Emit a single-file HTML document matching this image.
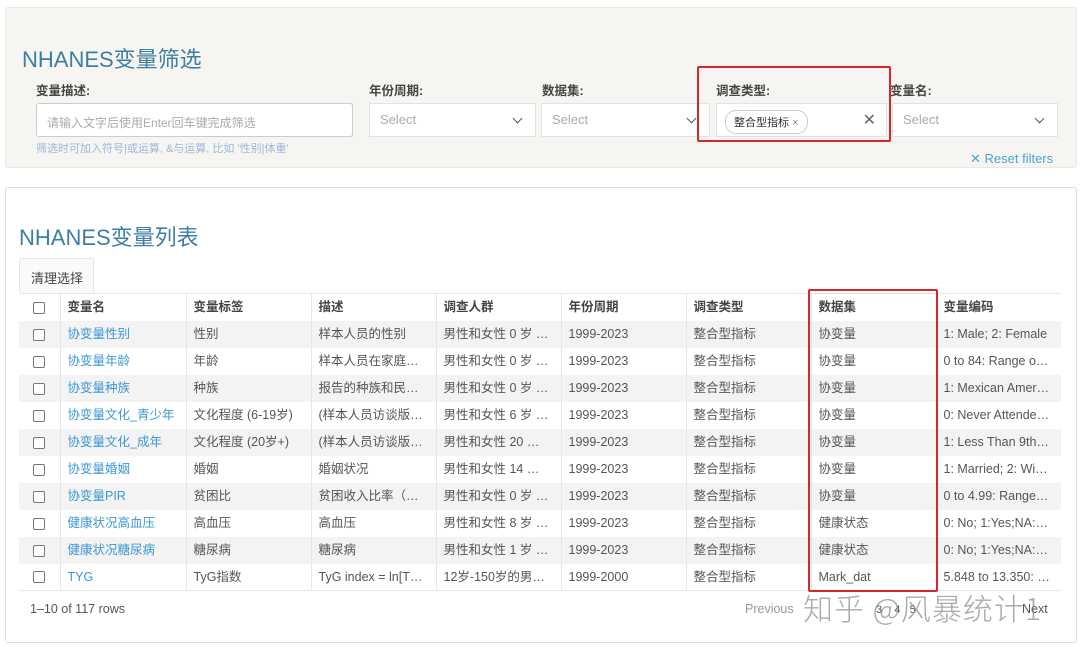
<!DOCTYPE html>
<html><head><meta charset="utf-8"><style>
*{box-sizing:border-box;margin:0;padding:0}
body{width:1080px;height:647px;background:#fff;font-family:"Liberation Sans","Noto Sans CJK SC",sans-serif;position:relative;overflow:hidden;color:#333}
.abs{position:absolute}
.p1{left:5px;top:7px;width:1072px;height:161px;background:#f7f5f1;border:1px solid #ebe8e2;border-radius:3px}
.p2{left:5px;top:187px;width:1072px;height:456px;background:#fff;border:1px solid #ddd;border-radius:3px}
h1{position:absolute;font-weight:normal;font-size:22px;color:#3d7fa3}
.lbl{position:absolute;top:80px;font-size:12.5px;font-weight:bold;color:#444}
.inp{position:absolute;top:103px;height:34px;background:#fff;border:1px solid #e2e2e2;font-size:13px;color:#aaa;padding:8px 10px}
.chev{position:absolute;right:14px;top:11px;width:7px;height:7px;border-right:1.5px solid #555;border-bottom:1.5px solid #555;transform:rotate(45deg)}
table{position:absolute;left:19px;top:293px;border-collapse:collapse;table-layout:fixed;width:1042px;font-size:12.5px}
tr{height:27px}
td,th{height:27px;line-height:26px;vertical-align:middle;border-left:1px solid #e6e6e6;padding:0 7px;white-space:nowrap;overflow:hidden;text-overflow:ellipsis;text-align:left;color:#555}
th{font-weight:bold;color:#444;border-top:1px solid #e6e6e6}
tr:nth-child(even) td{background:#f3f3f3}
tr:last-child td{border-bottom:1px solid #e6e6e6}
td a{color:#3c97d3}
.cb{display:inline-block;width:12px;height:12px;border:1px solid #777;border-radius:2px;vertical-align:middle;background:#fff}
td:first-child,th:first-child{border-left:none;text-align:center;padding:0}
</style></head><body>
<div class="abs p1"></div>
<h1 style="left:22px;top:42px">NHANES变量筛选</h1>
<div class="lbl" style="left:36px">变量描述:</div>
<div class="lbl" style="left:369px">年份周期:</div>
<div class="lbl" style="left:542px">数据集:</div>
<div class="lbl" style="left:716px">调查类型:</div>
<div class="lbl" style="left:890px">变量名:</div>
<div class="inp" style="left:36px;width:317px;border-radius:3px;border-color:#ccc;font-size:12px;padding-top:10px">请输入文字后使用Enter回车键完成筛选</div>
<div class="inp" style="left:369px;width:167px">Select<div class="chev"></div></div>
<div class="inp" style="left:541px;width:169px">Select<div class="chev"></div></div>
<div class="inp" style="left:716px;width:171px;padding:6px 8px"><span style="display:inline-block;border:1px solid #ccc;border-radius:11px;padding:3px 8px;font-size:11px;color:#333;background:#fff">整合型指标 <span style="color:#888">×</span></span><span style="position:absolute;right:10px;top:6px;color:#666;font-size:16px">✕</span></div>
<div class="inp" style="left:892px;width:166px">Select<div class="chev"></div></div>
<div class="abs" style="left:36px;top:140px;font-size:11px;color:#9bb8dc">筛选时可加入符号|或运算, &amp;与运算, 比如 '性别|体重'</div>
<div class="abs" style="left:970px;top:151px;font-size:13px;color:#4fa3d4">✕ Reset filters</div>
<div class="abs" style="left:697px;top:66px;width:194px;height:76px;border:2px solid #d8262a;border-radius:2px"></div>

<div class="abs p2"></div>
<h1 style="left:19px;top:220px">NHANES变量列表</h1>
<div class="abs" style="left:19px;top:258px;width:75px;height:35px;border:1px solid #e6e6e6;border-bottom:none;background:#fafafa;font-size:13px;padding:9px 0 0 11px;color:#444;white-space:nowrap">清理选择</div>
<table>
<colgroup><col style="width:41px"><col style="width:126px"><col style="width:125px"><col style="width:125px"><col style="width:125px"><col style="width:125px"><col style="width:125px"><col style="width:125px"><col style="width:125px"></colgroup>
<tr><th><span class="cb"></span></th><th>变量名</th><th>变量标签</th><th>描述</th><th>调查人群</th><th>年份周期</th><th>调查类型</th><th>数据集</th><th>变量编码</th></tr>
<tr><td><span class="cb"></span></td><td><a>协变量性别</a></td><td>性别</td><td>样本人员的性别</td><td>男性和女性 0 岁 …</td><td>1999-2023</td><td>整合型指标</td><td>协变量</td><td>1: Male; 2: Female</td></tr>
<tr><td><span class="cb"></span></td><td><a>协变量年龄</a></td><td>年龄</td><td>样本人员在家庭…</td><td>男性和女性 0 岁 …</td><td>1999-2023</td><td>整合型指标</td><td>协变量</td><td>0 to 84: Range o…</td></tr>
<tr><td><span class="cb"></span></td><td><a>协变量种族</a></td><td>种族</td><td>报告的种族和民…</td><td>男性和女性 0 岁 …</td><td>1999-2023</td><td>整合型指标</td><td>协变量</td><td>1: Mexican Amer…</td></tr>
<tr><td><span class="cb"></span></td><td><a>协变量文化_青少年</a></td><td>文化程度 (6-19岁)</td><td>(样本人员访谈版…</td><td>男性和女性 6 岁 …</td><td>1999-2023</td><td>整合型指标</td><td>协变量</td><td>0: Never Attende…</td></tr>
<tr><td><span class="cb"></span></td><td><a>协变量文化_成年</a></td><td>文化程度 (20岁+)</td><td>(样本人员访谈版…</td><td>男性和女性 20 …</td><td>1999-2023</td><td>整合型指标</td><td>协变量</td><td>1: Less Than 9th…</td></tr>
<tr><td><span class="cb"></span></td><td><a>协变量婚姻</a></td><td>婚姻</td><td>婚姻状况</td><td>男性和女性 14 …</td><td>1999-2023</td><td>整合型指标</td><td>协变量</td><td>1: Married; 2: Wi…</td></tr>
<tr><td><span class="cb"></span></td><td><a>协变量PIR</a></td><td>贫困比</td><td>贫困收入比率（…</td><td>男性和女性 0 岁 …</td><td>1999-2023</td><td>整合型指标</td><td>协变量</td><td>0 to 4.99: Range…</td></tr>
<tr><td><span class="cb"></span></td><td><a>健康状况高血压</a></td><td>高血压</td><td>高血压</td><td>男性和女性 8 岁 …</td><td>1999-2023</td><td>整合型指标</td><td>健康状态</td><td>0: No; 1:Yes;NA:…</td></tr>
<tr><td><span class="cb"></span></td><td><a>健康状况糖尿病</a></td><td>糖尿病</td><td>糖尿病</td><td>男性和女性 1 岁 …</td><td>1999-2023</td><td>整合型指标</td><td>健康状态</td><td>0: No; 1:Yes;NA:…</td></tr>
<tr><td><span class="cb"></span></td><td><a>TYG</a></td><td>TyG指数</td><td>TyG index = ln[T…</td><td>12岁-150岁的男…</td><td>1999-2000</td><td>整合型指标</td><td>Mark_dat</td><td>5.848 to 13.350: …</td></tr>
</table>
<div class="abs" style="left:808px;top:289px;width:130px;height:303px;border:2px solid #d8262a;border-radius:2px"></div>
<div class="abs" style="left:30px;top:602px;font-size:12.5px;color:#555">1–10 of 117 rows</div>
<div class="abs" style="left:745px;top:602px;font-size:12.5px;color:#999">Previous</div>
<div class="abs" style="left:876px;top:604px;font-size:11px;color:#555">3 &nbsp;&nbsp;&nbsp;4 &nbsp;&nbsp;5</div>
<div class="abs" style="left:1022px;top:602px;font-size:12.5px;color:#555">Next</div>
<div class="abs" style="left:803px;top:585px;font-size:30px;color:rgba(140,140,140,0.75);font-family:'Noto Sans CJK SC',sans-serif;font-weight:300;letter-spacing:1px">知乎 @风暴统计1</div>
</body></html>
